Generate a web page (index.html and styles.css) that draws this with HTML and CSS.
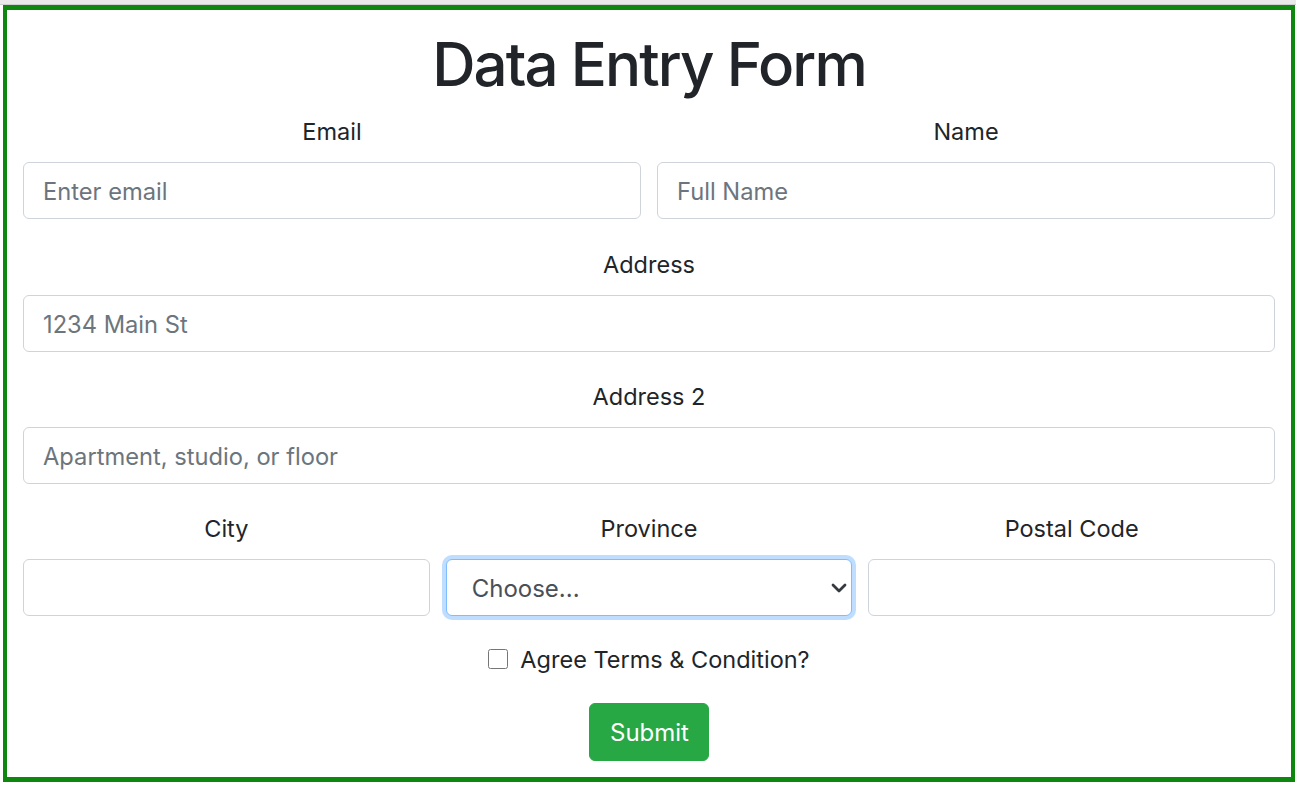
FILE: index.html
```html
<!DOCTYPE html>
<html lang="en">
<head>
<meta charset="utf-8">
<title>Data Entry Form</title>
<link rel="stylesheet" href="styles.css">
</head>
<body>
<div class="topbar"></div>
<div class="frame">
  <h1 class="title">Data Entry Form</h1>
  <form class="form">
    <div class="row two">
      <div class="group">
        <label class="label" for="email">Email</label>
        <input class="control" id="email" type="email" placeholder="Enter email">
      </div>
      <div class="group">
        <label class="label" for="name">Name</label>
        <input class="control" id="name" type="text" placeholder="Full Name">
      </div>
    </div>
    <div class="group">
      <label class="label" for="addr">Address</label>
      <input class="control" id="addr" type="text" placeholder="1234 Main St">
    </div>
    <div class="group">
      <label class="label" for="addr2">Address 2</label>
      <input class="control" id="addr2" type="text" placeholder="Apartment, studio, or floor">
    </div>
    <div class="row three">
      <div class="group">
        <label class="label" for="city">City</label>
        <input class="control" id="city" type="text">
      </div>
      <div class="group">
        <label class="label" for="prov">Province</label>
        <div class="select-wrap">
          <select class="control select" id="prov">
            <option>Choose...</option>
          </select>
          <svg class="chevron" width="16" height="10" viewBox="0 0 16 10"><path d="M2 2 L8 8 L14 2" fill="none" stroke="#343a40" stroke-width="2.8" stroke-linecap="round" stroke-linejoin="round"/></svg>
        </div>
      </div>
      <div class="group">
        <label class="label" for="postal">Postal Code</label>
        <input class="control" id="postal" type="text">
      </div>
    </div>
    <div class="check-row">
      <input class="check" id="agree" type="checkbox">
      <label class="check-label" for="agree">Agree Terms &amp; Condition?</label>
    </div>
    <div class="actions">
      <button class="btn" type="button">Submit</button>
    </div>
  </form>
</div>
</body>
</html>
```

FILE: styles.css
```css
* { box-sizing: border-box; }
html, body { margin: 0; padding: 0; background: #ffffff; }
body {
  font-family: Inter, "Noto Sans", "Liberation Sans", sans-serif;
  color: #212529;
  width: 1298px;
  height: 791px;
  overflow: hidden;
}
.topbar {
  height: 5px;
  width: 1296px;
  background: #e9e9e9;
  border-bottom: 1px solid #cfcfcf;
}
.frame {
  margin: 0 0 0 3px;
  width: 1292px;
  height: 777px;
  border: 4px solid #0d870d;
  border-top-width: 5px;
  border-bottom-width: 5px;
  padding: 0 16px;
  text-align: center;
}
.title {
  margin: 18px 0 14px;
  font-size: 60px;
  line-height: 72px;
  font-weight: 500;
  letter-spacing: -1.9px;
  color: #212529;
}
.form { display: flex; flex-direction: column; }
.row { display: grid; gap: 16px; }
.row.two { grid-template-columns: 1fr 1fr; }
.row.three { grid-template-columns: 1fr 1fr 1fr; }
.group { display: flex; flex-direction: column; margin-bottom: 27px; }
.row .group { margin-bottom: 0; }
.row.two { margin-bottom: 28px; }
.label {
  display: block;
  font-size: 23.5px;
  line-height: 36px;
  margin-bottom: 12px;
  color: #212529;
}
.control {
  display: block;
  width: 100%;
  height: 57px;
  padding: 10px 19px 8px;
  font-family: inherit;
  font-size: 23.7px;
  line-height: 36px;
  color: #495057;
  background: #fff;
  border: 1px solid #ced4da;
  border-radius: 6px;
  outline: none;
}
.control::placeholder { color: #6c757d; opacity: 1; }
.select-wrap { position: relative; }
.select {
  appearance: none;
  -webkit-appearance: none;
  padding-left: 25px;
  border-color: #80bdff;
  box-shadow: 0 0 0 4px rgba(0, 123, 255, 0.25);
  font-size: 24px;
}
.chevron {
  position: absolute;
  right: 5px;
  top: 24px;
  width: 16px;
  height: 10px;
}
.check-row {
  display: flex;
  align-items: center;
  justify-content: center;
  margin-top: 26px;
  height: 36px;
}
.check {
  width: 20px;
  height: 20px;
  margin: 0 12px 2px 0;
}
.check-label {
  font-size: 23.5px;
  line-height: 36px;
}
.actions {
  display: flex;
  justify-content: center;
  margin-top: 25px;
}
.btn {
  font-family: inherit;
  font-size: 24px;
  line-height: 36px;
  padding: 11px 20px 9px;
  height: 58px;
  width: 120px;
  color: #fff;
  background: #28a745;
  border: 1px solid #28a745;
  border-radius: 6px;
}
```
